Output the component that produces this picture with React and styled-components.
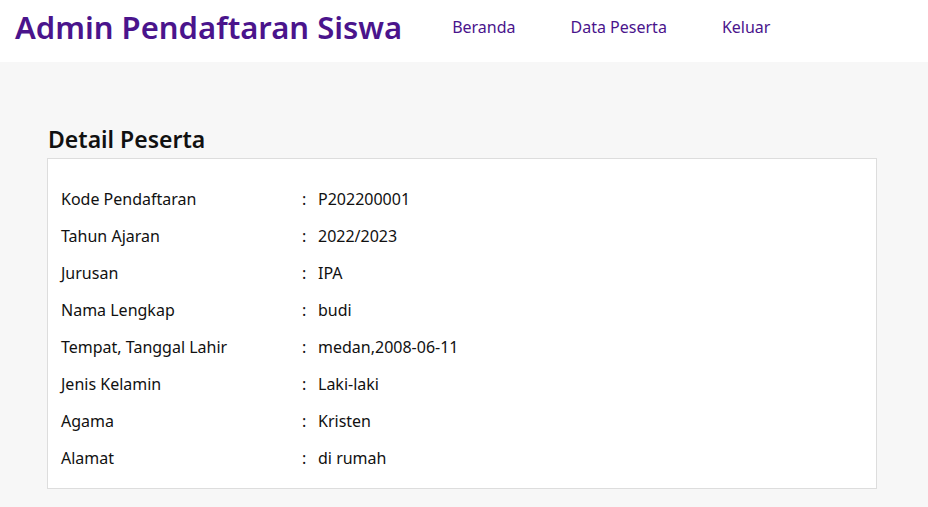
import React from "react";
import styled, { createGlobalStyle } from "styled-components";

const GlobalStyle = createGlobalStyle`
  * { box-sizing: border-box; }
  body {
    margin: 0;
    background: #f7f7f7;
    font-family: "Noto Sans", "Open Sans", sans-serif;
    color: #222;
  }
`;

const Header = styled.header`
  height: 62px;
  background: #fff;
  display: flex;
  align-items: center;
  padding: 0 15px;
`;

const Brand = styled.h1`
  margin: -8px 0 0;
  font-size: 31px;
  font-weight: 600;
  color: #4a148c;
`;

const Nav = styled.nav`
  display: flex;
  gap: 55px;
  margin-left: 50px;
  margin-top: -8px;
`;

const NavLink = styled.a`
  font-size: 16px;
  color: #4a148c;
  text-decoration: none;
`;

const Main = styled.main`
  padding: 60px 51px 0 47px;
`;

const Title = styled.h2`
  margin: 0 0 2px 1px;
  font-size: 23px;
  font-weight: 600;
  color: #111;
  line-height: 34px;
`;

const Card = styled.div`
  background: #fff;
  border: 1px solid #ddd;
  padding: 21px 13px 12px;
`;

const Row = styled.div`
  display: grid;
  grid-template-columns: 241px 16px 1fr;
  height: 37px;
  align-items: center;
  font-size: 16px;
  color: #111;
`;

const data = [
  ["Kode Pendaftaran", "P202200001"],
  ["Tahun Ajaran", "2022/2023"],
  ["Jurusan", "IPA"],
  ["Nama Lengkap", "budi"],
  ["Tempat, Tanggal Lahir", "medan,2008-06-11"],
  ["Jenis Kelamin", "Laki-laki"],
  ["Agama", "Kristen"],
  ["Alamat", "di rumah"],
];

export default function App() {
  return (
    <>
      <GlobalStyle />
      <Header>
        <Brand>Admin Pendaftaran Siswa</Brand>
        <Nav>
          <NavLink href="#">Beranda</NavLink>
          <NavLink href="#">Data Peserta</NavLink>
          <NavLink href="#">Keluar</NavLink>
        </Nav>
      </Header>
      <Main>
        <Title>Detail Peserta</Title>
        <Card>
          {data.map(([label, value]) => (
            <Row key={label}>
              <span>{label}</span>
              <span>:</span>
              <span>{value}</span>
            </Row>
          ))}
        </Card>
      </Main>
    </>
  );
}
